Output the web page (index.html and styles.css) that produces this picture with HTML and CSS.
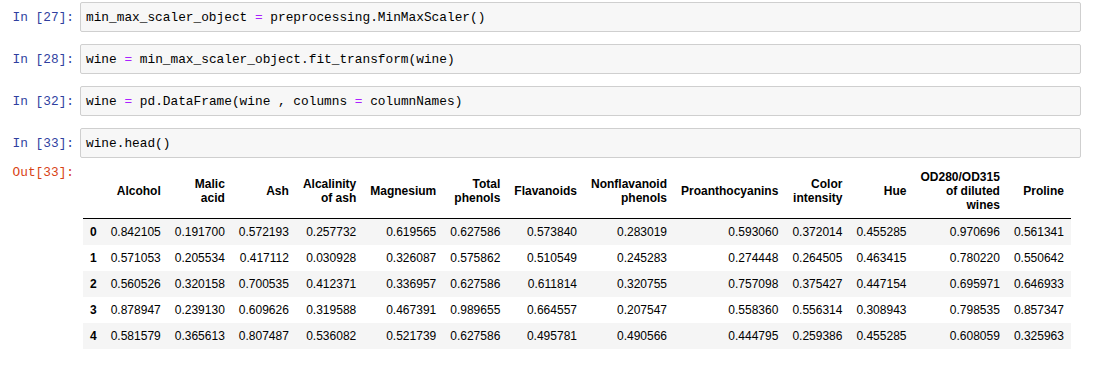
FILE: index.html
```html
<!DOCTYPE html>
<html>
<head>
<meta charset="utf-8">
<link rel="stylesheet" href="styles.css">
</head>
<body>
<div class="notebook">
  <div class="cell">
    <div class="prompt in">In&nbsp;[27]:</div>
    <div class="input">min_max_scaler_object <span class="op">=</span> preprocessing.MinMaxScaler()</div>
  </div>
  <div class="cell">
    <div class="prompt in">In&nbsp;[28]:</div>
    <div class="input">wine <span class="op">=</span> min_max_scaler_object.fit_transform(wine)</div>
  </div>
  <div class="cell">
    <div class="prompt in">In&nbsp;[32]:</div>
    <div class="input">wine <span class="op">=</span> pd.DataFrame(wine , columns <span class="op">=</span> columnNames)</div>
  </div>
  <div class="cell last">
    <div class="prompt in">In&nbsp;[33]:</div>
    <div class="input">wine.head()</div>
  </div>
  <div class="output">
    <div class="prompt out">Out[33]:</div>
    <div class="output-sub">
      <table class="dataframe">
        <thead>
          <tr>
            <th></th>
            <th>Alcohol</th>
            <th>Malic acid</th>
            <th>Ash</th>
            <th>Alcalinity of ash</th>
            <th>Magnesium</th>
            <th>Total phenols</th>
            <th>Flavanoids</th>
            <th>Nonflavanoid phenols</th>
            <th>Proanthocyanins</th>
            <th>Color intensity</th>
            <th>Hue</th>
            <th>OD280/OD315 of diluted wines</th>
            <th>Proline</th>
          </tr>
        </thead>
        <tbody>
          <tr><th>0</th><td>0.842105</td><td>0.191700</td><td>0.572193</td><td>0.257732</td><td>0.619565</td><td>0.627586</td><td>0.573840</td><td>0.283019</td><td>0.593060</td><td>0.372014</td><td>0.455285</td><td>0.970696</td><td>0.561341</td></tr>
          <tr><th>1</th><td>0.571053</td><td>0.205534</td><td>0.417112</td><td>0.030928</td><td>0.326087</td><td>0.575862</td><td>0.510549</td><td>0.245283</td><td>0.274448</td><td>0.264505</td><td>0.463415</td><td>0.780220</td><td>0.550642</td></tr>
          <tr><th>2</th><td>0.560526</td><td>0.320158</td><td>0.700535</td><td>0.412371</td><td>0.336957</td><td>0.627586</td><td>0.611814</td><td>0.320755</td><td>0.757098</td><td>0.375427</td><td>0.447154</td><td>0.695971</td><td>0.646933</td></tr>
          <tr><th>3</th><td>0.878947</td><td>0.239130</td><td>0.609626</td><td>0.319588</td><td>0.467391</td><td>0.989655</td><td>0.664557</td><td>0.207547</td><td>0.558360</td><td>0.556314</td><td>0.308943</td><td>0.798535</td><td>0.857347</td></tr>
          <tr><th>4</th><td>0.581579</td><td>0.365613</td><td>0.807487</td><td>0.536082</td><td>0.521739</td><td>0.627586</td><td>0.495781</td><td>0.490566</td><td>0.444795</td><td>0.259386</td><td>0.455285</td><td>0.608059</td><td>0.325963</td></tr>
        </tbody>
      </table>
    </div>
  </div>
</div>
</body>
</html>
```
FILE: styles.css
```css
html, body {
  margin: 0;
  padding: 0;
  background: #ffffff;
}

.notebook {
  padding: 2px 20px 0 0;
}

.cell {
  display: flex;
  align-items: flex-start;
  margin-bottom: 12px;
}

.cell.last {
  margin-bottom: 0;
}

.prompt {
  width: 80px;
  flex: 0 0 80px;
  box-sizing: border-box;
  padding-right: 6px;
  text-align: right;
  font-family: "Liberation Mono", "DejaVu Sans Mono", monospace;
  font-size: 12.8px;
  line-height: 17px;
  white-space: nowrap;
}

.cell .prompt {
  padding-top: 7px;
}

.prompt.in {
  color: #303f9f;
}

.prompt.out {
  color: #d84315;
  padding-top: 6px;
}

.input {
  flex: 1;
  background: #f7f7f7;
  border: 1px solid #cfcfcf;
  border-radius: 2px;
  padding: 6px 5px 5px 5px;
  font-family: "Liberation Mono", "DejaVu Sans Mono", monospace;
  font-size: 12.8px;
  line-height: 17px;
  color: #000;
  white-space: pre;
}

.op {
  color: #aa22ff;
}

.output {
  display: flex;
  align-items: flex-start;
}

.output-sub {
  flex: 1;
  padding: 6px 0 0 3px;
}

.dataframe {
  border-collapse: collapse;
  border-spacing: 0;
  border: none;
  width: min-content;
  font-family: "Liberation Sans", Arial, sans-serif;
  font-size: 12px;
  color: #000;
}

.dataframe thead {
  border-bottom: 1px solid #000;
}

.dataframe th,
.dataframe td {
  text-align: right;
  vertical-align: middle;
  padding: 6px 7px;
  line-height: normal;
  border: none;
}

.dataframe th {
  font-weight: bold;
}

.dataframe td {
  white-space: nowrap;
}

.dataframe tbody tr:nth-child(odd) {
  background: #f5f5f5;
}
```
